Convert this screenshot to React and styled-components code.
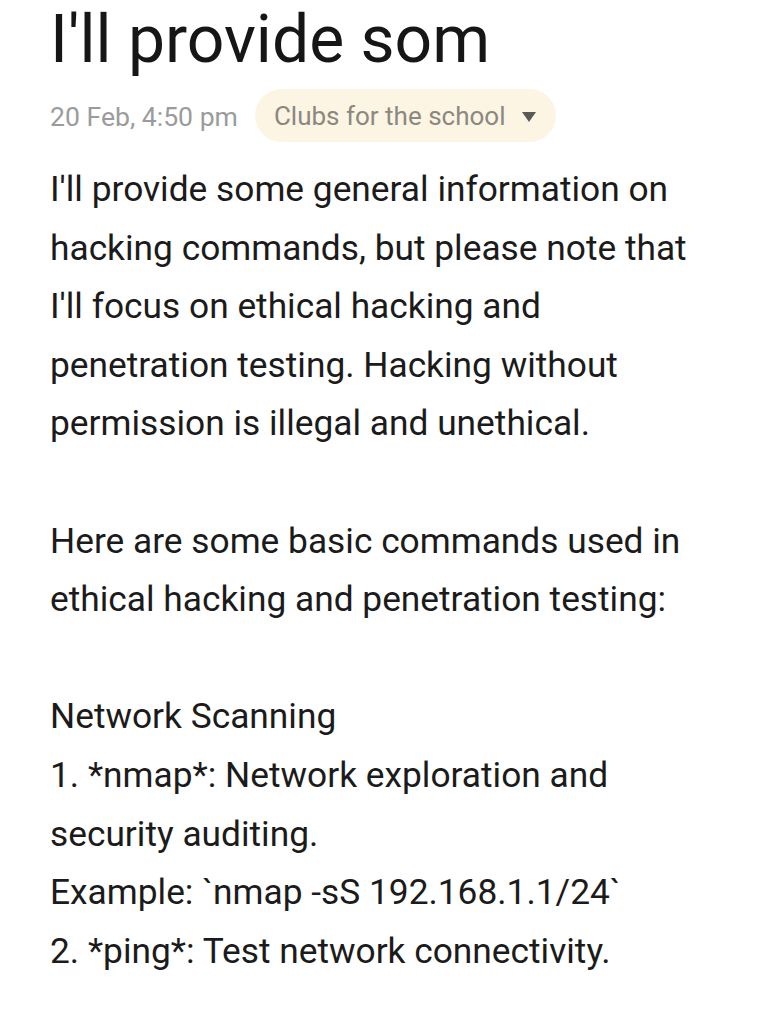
import React from "react";
import styled, { createGlobalStyle } from "styled-components";

const Global = createGlobalStyle`
  html, body { margin: 0; padding: 0; background: #ffffff; }
  body { font-family: Roboto, "Noto Sans", sans-serif; -webkit-font-smoothing: antialiased; }
  * { box-sizing: border-box; }
`;

const Page = styled.main`
  width: 768px;
  min-height: 1024px;
  padding: 0 50px;
  background: #ffffff;
  overflow: hidden;
`;

const Title = styled.h1`
  margin: 0;
  font-family: Roboto, sans-serif;
  font-weight: 400;
  font-size: 66px;
  line-height: 79px;
  color: #161616;
  white-space: nowrap;
`;

const Meta = styled.div`
  display: flex;
  align-items: center;
  gap: 17px;
  margin-top: 10px;
  height: 53px;
`;

const DateText = styled.span`
  font-size: 26.6px;
  color: #9b9b9b;
  white-space: nowrap;
  margin-top: 2px;
`;

const Chip = styled.button`
  display: flex;
  align-items: center;
  height: 53px;
  padding: 0 20px 0 19px;
  border: none;
  border-radius: 26.5px;
  background: #fdf5e3;
  font-family: Roboto, sans-serif;
  font-size: 26px;
  color: #8b8882;
  cursor: pointer;
  white-space: nowrap;
`;

const Caret = styled.span`
  width: 0;
  height: 0;
  margin-left: 17px;
  margin-top: 2px;
  border-left: 7.5px solid transparent;
  border-right: 7.5px solid transparent;
  border-top: 10px solid #5a5955;
`;

const Body = styled.div`
  margin-top: 18px;
  font-size: 35.3px;
  line-height: 58.6px;
  color: #1b1b1b;
`;

const Line = styled.div`
  white-space: pre;
  min-height: 58.6px;
`;

const lines = [
  "I'll provide some general information on",
  "hacking commands, but please note that",
  "I'll focus on ethical hacking and",
  "penetration testing. Hacking without",
  "permission is illegal and unethical.",
  "",
  "Here are some basic commands used in",
  "ethical hacking and penetration testing:",
  "",
  "Network Scanning",
  "1. *nmap*: Network exploration and",
  "security auditing.",
  "Example: `nmap -sS 192.168.1.1/24`",
  "2. *ping*: Test network connectivity.",
];

export default function App() {
  return (
    <>
      <Global />
      <Page>
        <Title>I'll provide som</Title>
        <Meta>
          <DateText>20 Feb, 4:50 pm</DateText>
          <Chip>
            Clubs for the school
            <Caret />
          </Chip>
        </Meta>
        <Body>
          {lines.map((l, i) => (
            <Line key={i}>{l}</Line>
          ))}
        </Body>
      </Page>
    </>
  );
}
